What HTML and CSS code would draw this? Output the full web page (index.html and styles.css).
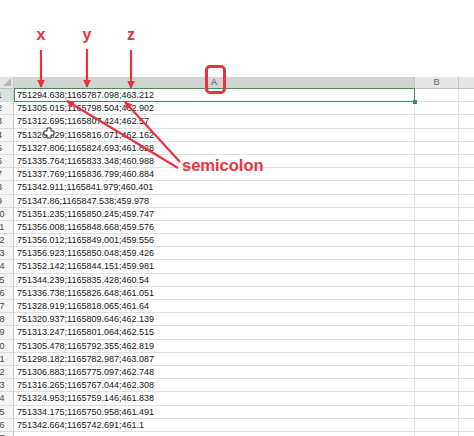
FILE: index.html
```html
<!DOCTYPE html>
<html>
<head>
<meta charset="utf-8">
<link rel="stylesheet" href="styles.css">
</head>
<body>
<div class="page">
  <div class="sheet">
    <div class="row head">
      <div class="rh corner"><span class="tri"></span></div>
      <div class="ch ch-a">A</div>
      <div class="ch ch-b">B</div>
      <div class="ch ch-c"></div>
    </div>
    <div class="row"><div class="rh sel">1</div><div class="cell a active">751294.638;1165787.098;463.212</div><div class="cell b"></div><div class="cell c"></div></div>
    <div class="row"><div class="rh">2</div><div class="cell a">751305.015;1165798.504;462.902</div><div class="cell b"></div><div class="cell c"></div></div>
    <div class="row"><div class="rh">3</div><div class="cell a">751312.695;1165807.424;462.57</div><div class="cell b"></div><div class="cell c"></div></div>
    <div class="row"><div class="rh">4</div><div class="cell a">751320.829;1165816.071;462.162</div><div class="cell b"></div><div class="cell c"></div></div>
    <div class="row"><div class="rh">5</div><div class="cell a">751327.806;1165824.693;461.628</div><div class="cell b"></div><div class="cell c"></div></div>
    <div class="row"><div class="rh">6</div><div class="cell a">751335.764;1165833.348;460.988</div><div class="cell b"></div><div class="cell c"></div></div>
    <div class="row"><div class="rh">7</div><div class="cell a">751337.769;1165836.799;460.884</div><div class="cell b"></div><div class="cell c"></div></div>
    <div class="row"><div class="rh">8</div><div class="cell a">751342.911;1165841.979;460.401</div><div class="cell b"></div><div class="cell c"></div></div>
    <div class="row"><div class="rh">9</div><div class="cell a">751347.86;1165847.538;459.978</div><div class="cell b"></div><div class="cell c"></div></div>
    <div class="row"><div class="rh">10</div><div class="cell a">751351.235;1165850.245;459.747</div><div class="cell b"></div><div class="cell c"></div></div>
    <div class="row"><div class="rh">11</div><div class="cell a">751356.008;1165848.668;459.576</div><div class="cell b"></div><div class="cell c"></div></div>
    <div class="row"><div class="rh">12</div><div class="cell a">751356.012;1165849.001;459.556</div><div class="cell b"></div><div class="cell c"></div></div>
    <div class="row"><div class="rh">13</div><div class="cell a">751356.923;1165850.048;459.426</div><div class="cell b"></div><div class="cell c"></div></div>
    <div class="row"><div class="rh">14</div><div class="cell a">751352.142;1165844.151;459.981</div><div class="cell b"></div><div class="cell c"></div></div>
    <div class="row"><div class="rh">15</div><div class="cell a">751344.239;1165835.428;460.54</div><div class="cell b"></div><div class="cell c"></div></div>
    <div class="row"><div class="rh">16</div><div class="cell a">751336.738;1165826.648;461.051</div><div class="cell b"></div><div class="cell c"></div></div>
    <div class="row"><div class="rh">17</div><div class="cell a">751328.919;1165818.065;461.64</div><div class="cell b"></div><div class="cell c"></div></div>
    <div class="row"><div class="rh">18</div><div class="cell a">751320.937;1165809.646;462.139</div><div class="cell b"></div><div class="cell c"></div></div>
    <div class="row"><div class="rh">19</div><div class="cell a">751313.247;1165801.064;462.515</div><div class="cell b"></div><div class="cell c"></div></div>
    <div class="row"><div class="rh">20</div><div class="cell a">751305.478;1165792.355;462.819</div><div class="cell b"></div><div class="cell c"></div></div>
    <div class="row"><div class="rh">21</div><div class="cell a">751298.182;1165782.987;463.087</div><div class="cell b"></div><div class="cell c"></div></div>
    <div class="row"><div class="rh">22</div><div class="cell a">751306.883;1165775.097;462.748</div><div class="cell b"></div><div class="cell c"></div></div>
    <div class="row"><div class="rh">23</div><div class="cell a">751316.265;1165767.044;462.308</div><div class="cell b"></div><div class="cell c"></div></div>
    <div class="row"><div class="rh">24</div><div class="cell a">751324.953;1165759.146;461.838</div><div class="cell b"></div><div class="cell c"></div></div>
    <div class="row"><div class="rh">25</div><div class="cell a">751334.175;1165750.958;461.491</div><div class="cell b"></div><div class="cell c"></div></div>
    <div class="row"><div class="rh">26</div><div class="cell a">751342.664;1165742.691;461.1</div><div class="cell b"></div><div class="cell c"></div></div>
    <div class="row"><div class="rh">27</div><div class="cell a"></div><div class="cell b"></div><div class="cell c"></div></div>
  </div>

  <svg class="overlay" width="474" height="436" viewBox="0 0 474 436" xmlns="http://www.w3.org/2000/svg">
    <defs>
      <marker id="ah" viewBox="0 0 10 10" refX="9" refY="5" markerWidth="3.6" markerHeight="3.6" orient="auto-start-reverse">
        <path d="M0 0 L10 5 L0 10 z" fill="#e8343e"/>
      </marker>
    </defs>
    <g class="label">
      <text x="41" y="40" text-anchor="middle">x</text>
      <text x="87" y="40" text-anchor="middle">y</text>
      <text x="131" y="40" text-anchor="middle">z</text>
      <text class="big" x="182" y="171">semicolon</text>
    </g>
    <g stroke="#e8343e" stroke-width="2.2" fill="none">
      <line x1="41" y1="50" x2="41" y2="87" marker-end="url(#ah)"/>
      <line x1="87" y1="49" x2="87" y2="87" marker-end="url(#ah)"/>
      <line x1="131" y1="50" x2="131" y2="88" marker-end="url(#ah)"/>
      <line x1="178" y1="168" x2="67" y2="101" marker-end="url(#ah)"/>
      <line x1="180" y1="162" x2="125" y2="102" marker-end="url(#ah)"/>
      <rect x="206.5" y="66.5" width="18" height="26" rx="3.5" stroke="#e8343e" stroke-width="3"/>
    </g>
    <g transform="translate(49 133)">
      <path d="M-2 -5 H2 V-2 H5 V2 H2 V5 H-2 V2 H-5 V-2 H-2 Z" fill="#ffffff" stroke="#222" stroke-width="1"/>
    </g>
  </svg>
</div>
</body>
</html>
```
FILE: styles.css
```css
html, body {
  margin: 0;
  padding: 0;
  background: #ffffff;
}
.page {
  position: relative;
  width: 474px;
  height: 436px;
  overflow: hidden;
}
.sheet {
  padding-top: 77px;
  margin-left: -14px;
  font-family: "Liberation Sans", Arial, sans-serif;
  font-size: 9px;
  color: #151515;
}
.row {
  display: grid;
  grid-template-columns: 28px 401px 44px 60px;
  height: 13.2px;
}
.row.head {
  height: 12px;
}
.row > div {
  box-sizing: border-box;
  border-bottom: 1px solid #e0e0e0;
  border-right: 1px solid #e2e2e2;
  line-height: 12.2px;
  white-space: nowrap;
  overflow: hidden;
}
.rh {
  background: #f5f5f5;
  border-right: 1px solid #c6c6c6 !important;
  border-bottom: 1px solid #dcdcdc !important;
  text-align: center;
  color: #444444;
}
.rh.sel {
  background: #dedede;
  color: #333333;
}
.corner {
  background: #e4e4e4 !important;
  position: relative;
  border-bottom: 1px solid #bdbdbd !important;
}
.tri {
  position: absolute;
  right: 2px;
  bottom: 2px;
  width: 0;
  height: 0;
  border-left: 8px solid transparent;
  border-bottom: 8px solid #b8b8b8;
}
.ch {
  text-align: center;
  color: #666666;
  line-height: 11px !important;
  border-bottom: 1px solid #bdbdbd !important;
  border-right: 1px solid #c4c4c4 !important;
}
.ch-a {
  background: #d3d3d3;
  color: #4d4d4d;
}
.ch-b, .ch-c {
  background: #e6e6e6;
}
.cell.a {
  padding-left: 3px;
}
.cell.active {
  position: relative;
  overflow: visible;
}
.cell.active::after {
  content: "";
  position: absolute;
  left: 0;
  top: -1px;
  right: -1px;
  bottom: -1px;
  border: 1.5px solid #3f8f5f;
}
.cell.active::before {
  content: "";
  position: absolute;
  right: -3px;
  bottom: -3px;
  width: 4px;
  height: 4px;
  background: #3f8f5f;
  z-index: 2;
}
.overlay {
  position: absolute;
  left: 0;
  top: 0;
}
.label text {
  font-family: "Liberation Sans", Arial, sans-serif;
  font-weight: bold;
  font-size: 16px;
  fill: #e8343e;
}
.label text.big {
  font-size: 16.5px;
}
```
